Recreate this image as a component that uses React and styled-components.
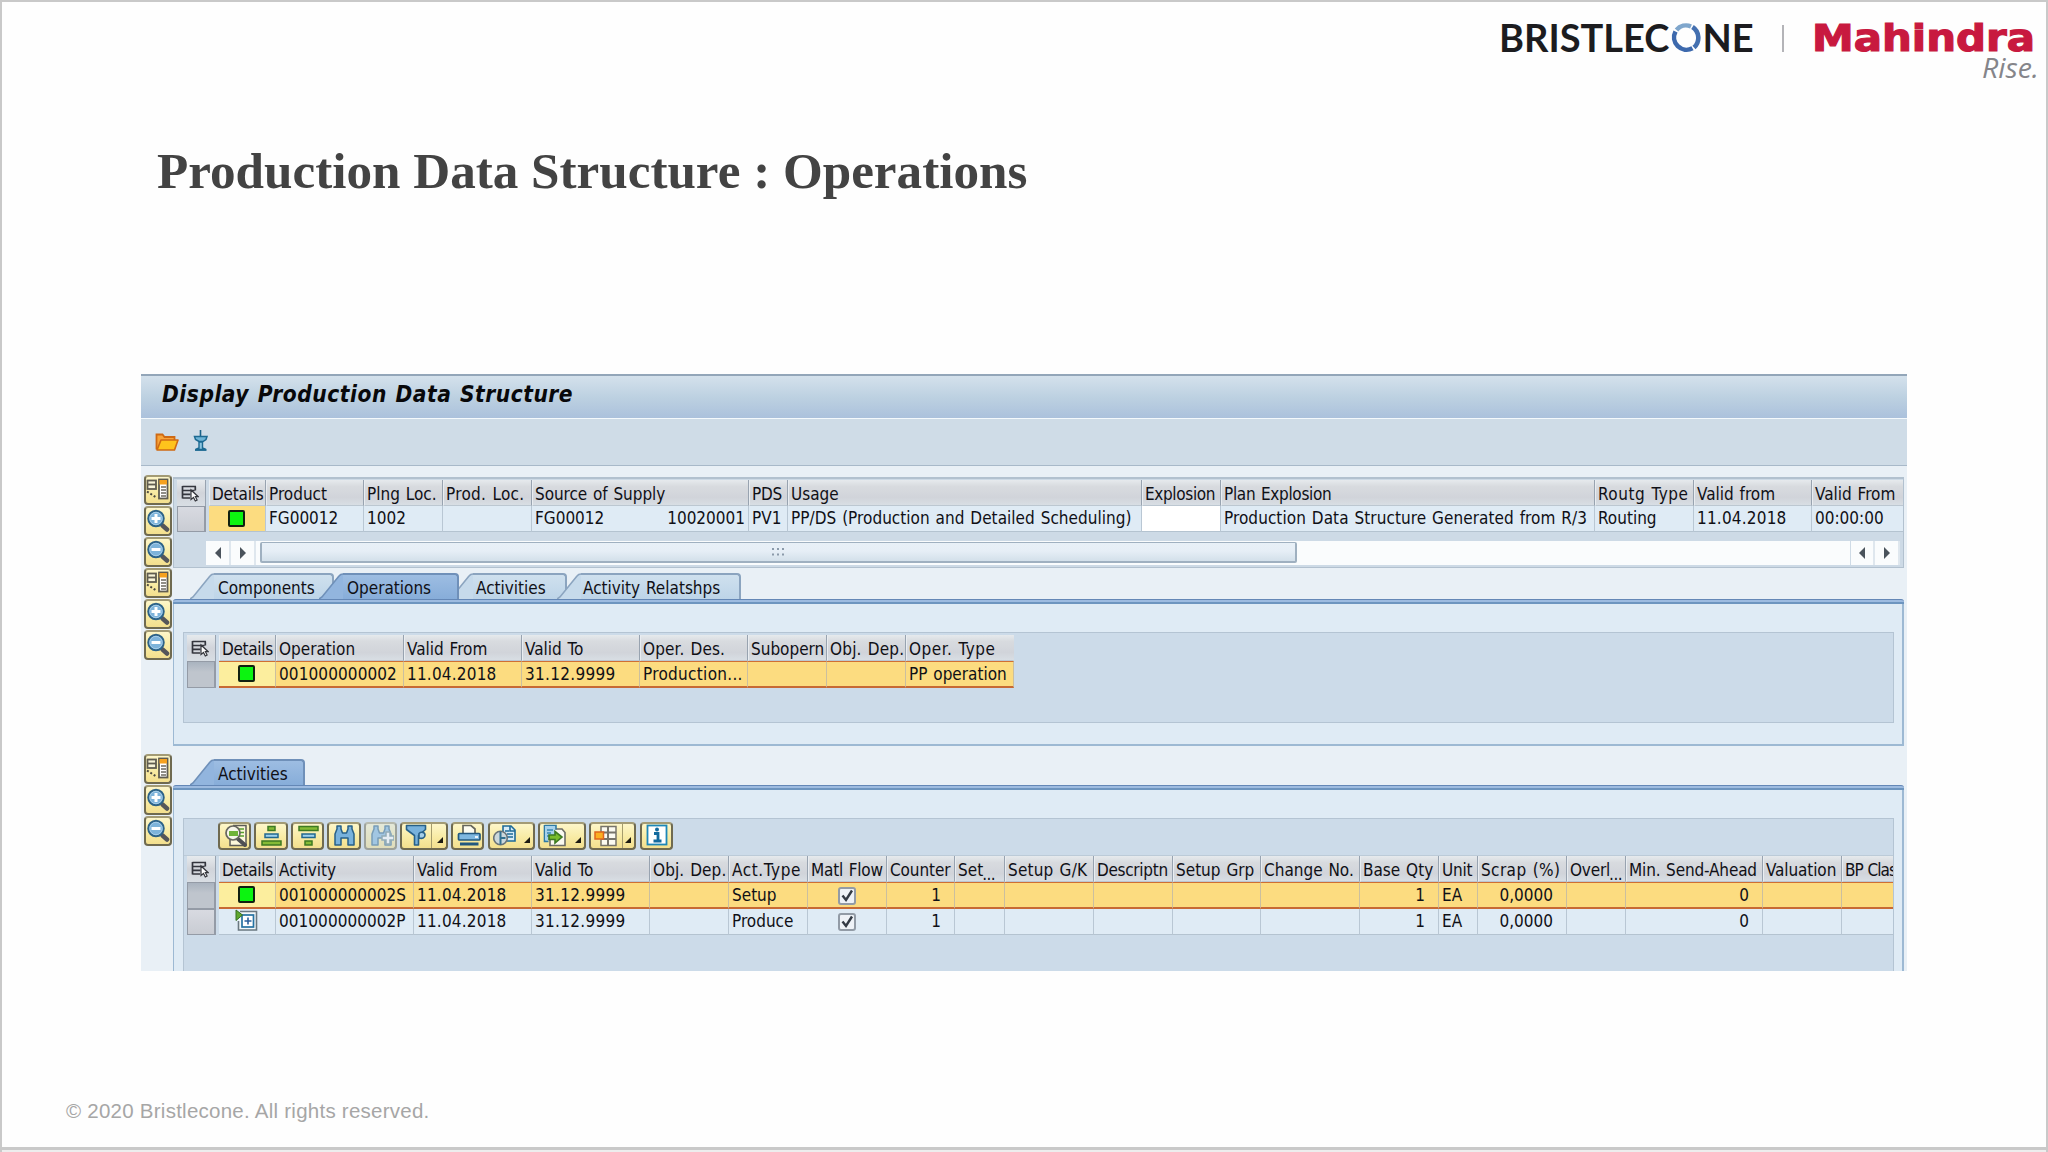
import React from 'react';
import styled, { createGlobalStyle, css } from 'styled-components';

const Global = createGlobalStyle`
  *, *::before, *::after { box-sizing: border-box; }
  html, body { margin: 0; padding: 0; background: #fefefe; }
  svg { display: block; }
`;

const uiFont = css`
  font-family: 'DejaVu Sans Condensed', 'DejaVu Sans', sans-serif;
  font-stretch: condensed;
`;

/* ---------- slide ---------- */

const Slide = styled.main`
  width: 2048px;
  height: 1152px;
  overflow: hidden;
  background: #fefefe;
  border: solid #c9c9c9;
  border-width: 2px 2px 0 2px;
  display: flex;
  flex-direction: column;
`;

const BrandBar = styled.header`
  height: 88px;
  flex: none;
  display: flex;
  justify-content: flex-end;
  padding: 14px 5px 0 0;
`;

const Bristlecone = styled.div`
  display: flex;
  width: 261px;
  height: 42px;
  font: 700 38px/43px Lato, sans-serif;
  color: #1c1c1f;
`;

const Ring = styled.svg`
  margin: 7px 2px 0 1px;
  flex: none;
`;

const BrandRule = styled.span`
  width: 2px;
  height: 27px;
  margin: 9px 28px 0 22px;
  background: #b4b4b8;
`;

const Heading = styled.h1`
  margin: 46px 0 0 155px;
  height: 70px;
  flex: none;
  font: 700 51.15px/70px 'Liberation Serif', serif;
  color: #434343;
  white-space: nowrap;
`;

const Copyright = styled.footer`
  margin: 125px 0 0 64px;
  height: 30px;
  flex: none;
  font: 400 20.5px/30px 'Liberation Sans', sans-serif;
  letter-spacing: 0.25px;
  color: #a6a6a6;
`;

const SlideEdge = styled.div`
  margin-top: auto;
  height: 5px;
  flex: none;
  background: #ededed;
  border-top: 3px solid #c9c9c9;
`;

/* ---------- application window ---------- */

const Window = styled.section`
  ${uiFont}
  width: 1766px;
  height: 597px;
  flex: none;
  margin: 168px 0 0 139px;
  overflow: hidden;
  display: flex;
  flex-direction: column;
  background: #e9f0f6;
  font-size: 17px;
  letter-spacing: 0;
  word-spacing: 1px;
  color: #101016;
`;

const TitleBar = styled.div`
  height: 45px;
  flex: none;
  padding-left: 21px;
  border-top: 2px solid #93a6b9;
  border-bottom: 1px solid #f4f9fc;
  background: linear-gradient(#d4e1ec, #bdd1e1 50%, #abc1dc);
  font-size: 22.5px;
  font-weight: 700;
  font-style: italic;
  letter-spacing: 0.53px;
  line-height: 37px;
  color: #08080a;
`;

const AppBar = styled.div`
  height: 47px;
  flex: none;
  display: flex;
  align-items: flex-start;
  padding: 10px 0 0 14px;
  gap: 14px;
  background: #cfdce7;
  border-bottom: 1px solid #a8b9c9;
`;

const Section = styled.div`
  display: flex;
  height: ${(p) => p.$h}px;
  flex: none;
  padding-right: 3px;
`;

const Rail = styled.div`
  width: 32px;
  flex: none;
  display: flex;
  flex-direction: column;
  gap: 1px;
  padding: ${(p) => p.$top}px 0 0 3px;
`;

const Body = styled.div`
  flex: 1;
  min-width: 0;
  display: flex;
  flex-direction: column;
  padding-top: ${(p) => p.$top}px;
`;

const yellowFace = css`
  border: 2px solid #6f6a50;
  border-top-color: #a39b75;
  border-radius: 4px;
  background: linear-gradient(#fdf6c9, #f8eba4 55%, #f3df8e);
`;

const RailButton = styled.span`
  ${yellowFace}
  width: 28px;
  height: 30px;
  flex: none;
  display: flex;
  align-items: center;
  justify-content: center;
`;

/* ---------- tables ---------- */

const ListBox = styled.div`
  flex: none;
  height: 91px;
  border: 1px solid #b2c1cf;
  border-top-width: 2px;
  background: #cddae6;
  padding: 1px 0 0 3px;
  overflow: hidden;
  display: flex;
  flex-direction: column;
`;

const Row = styled.div`
  display: grid;
  grid-template-columns: ${(p) => p.$cols};
  flex: none;
  width: max-content;
  height: ${(p) => p.$h || 26}px;
`;

const cellBase = css`
  overflow: hidden;
  white-space: nowrap;
  padding: 0 3px;
`;

const HeadCell = styled.div`
  ${cellBase}
  line-height: 28px;
  border-right: 1px solid ${(p) => (p.$last ? 'transparent' : '#98a3b0')};
  border-left: 1px solid #e9edf1;
  border-bottom: 1px solid #bcc7d1;
  padding: 0 0 0 2px;
  letter-spacing: ${(p) => p.$track || 0}px;
  background: linear-gradient(#e6eaed, #d8dbdf 25%, #d1d4da 70%, #d8dee4);
`;

const Cell = styled.div`
  ${cellBase}
  line-height: 25px;
  display: flex;
  justify-content: ${(p) => (p.$right ? 'flex-end' : p.$center ? 'center' : 'space-between')};
  padding-right: ${(p) => p.$pad || 3}px;
  border-right: 1px solid #b9c7d4;
  border-bottom: 1px solid #b4c3d0;
  letter-spacing: ${(p) => p.$track || 0}px;
  background: ${(p) => p.$bg || '#dfebf5'};
  ${(p) =>
    p.$selected &&
    css`
      background: ${p.$center && p.$pale ? '#fcee9e' : '#fcdc80'};
      border-top: 1px solid #cf6f33;
      border-bottom: 2px solid #c76a34;
      border-right-color: #cbbf9f;
    `}
`;

const SelectCell = styled.div`
  border: 1px solid #949ba6;
  border-width: 1px 2px 1px 1px;
  background: ${(p) => (p.$down ? 'linear-gradient(#a9b3bf, #bfc5cd 40%)' : 'linear-gradient(#d8dae1, #c9ccd3)')};
`;

const SelectHead = styled.div`
  display: flex;
  align-items: center;
  justify-content: center;
  padding-right: 2px;
  border-right: 1px solid #98a3b0;
  background: linear-gradient(#e6eaed, #d1d4da 50%, #d8dee4);
`;

const Light = styled.span`
  width: 17px;
  height: 17px;
  margin: ${(p) => p.$top || 4}px 2px 0 0;
  background: #0cf410;
  border: 2px solid #102010;
  border-radius: 2px;
`;

const Check = styled.span`
  width: 18px;
  height: 18px;
  margin: 4px 1px 0 0;
  background: #eef2f7;
  border: 2px solid #929ba6;
  border-radius: 3px;
`;

const Ellipsis = styled.span`
  position: relative;
  top: 4px;
  margin-left: -1px;
  letter-spacing: -0.5px;
`;

/* ---------- scrollbar ---------- */

const ScrollRow = styled.div`
  display: flex;
  flex: none;
  height: 24px;
  margin: 9px 3px 0 29px;
  background: #fafcfd;
`;

const Arrow = styled.span`
  width: 25px;
  height: 24px;
  flex: none;
  display: flex;
  align-items: center;
  justify-content: center;
  border-right: 2px solid #dfe7ee;
  border-left: ${(p) => (p.$lead ? '1px solid #cfdbe6' : 'none')};
`;

const Track = styled.span`
  flex: 1;
  padding: 1px 0 0 4px;
`;

const Thumb = styled.span`
  display: flex;
  align-items: center;
  justify-content: center;
  width: 1037px;
  height: 21px;
  padding-right: 3px;
  border: 2px solid #9fb0c0;
  border-top-width: 1px;
  border-radius: 2px;
  background: linear-gradient(#e8f0f7, #e6eef6 45%, #d3e0ea);
`;

/* ---------- tabs ---------- */

const TabStrip = styled.div`
  display: flex;
  flex: none;
  height: 26px;
  padding-left: 17px;
`;

const TabShell = styled.div`
  display: flex;
  width: ${(p) => p.$w}px;
  margin-left: ${(p) => p.$shift || 0}px;
  position: relative;
  z-index: ${(p) => (p.$on ? 2 : 1)};
`;

const TabFace = styled.div`
  flex: 1;
  height: 26px;
  padding-left: ${(p) => p.$indent ?? 4}px;
  line-height: 27px;
  white-space: nowrap;
  border-top: 2px solid ${(p) => (p.$on ? '#6f90b9' : '#8ba4bf')};
  border-right: 2px solid ${(p) => (p.$on ? '#6f90b9' : '#8ba4bf')};
  border-top-right-radius: 4px;
  background: ${(p) => (p.$on ? 'linear-gradient(#9dbde2, #87add9)' : 'linear-gradient(#cfe0ee, #bdd4e8)')};
`;

const TabLine = styled.div`
  height: 5px;
  flex: none;
  border-top: 1px solid #6487b6;
  border-bottom: 2px solid #6d95bf;
  background: #9dbbe0;
  border-radius: 3px 3px 0 0;
`;

const Panel = styled.div`
  height: ${(p) => p.$h}px;
  flex: none;
  padding: 28px 8px 0 9px;
  border: 2px solid #9db9d3;
  border-width: 0 2px 2px 1px;
  background: #dfebf5;
`;

const GridArea = styled.div`
  height: ${(p) => p.$h}px;
  overflow: hidden;
  border: 1px solid #b4c4d3;
  background: #ccdbe9;
  padding: ${(p) => p.$top || 0}px 0 0 3px;
`;

const ToolRow = styled.div`
  display: flex;
  gap: 3.3px;
  height: 37px;
  padding: 3px 0 0 34px;
  margin-left: -3px;
  border-bottom: 1px solid #bccbd8;
`;

const ToolButton = styled.span`
  ${yellowFace}
  width: ${(p) => (p.$wide ? 47.4 : 33.2)}px;
  height: 28px;
  display: flex;
  align-items: center;
  padding-left: 3px;
  opacity: ${(p) => (p.$off ? 0.5 : 1)};
`;

const Drop = styled.span`
  align-self: stretch;
  margin-left: 2px;
  flex: 1;
  display: flex;
  align-items: flex-end;
  justify-content: flex-end;
  padding: 0 3px 5px 0;
  border-left: 1px solid ${(p) => (p.$line ? '#a59c6c' : 'transparent')};
`;

/* ---------- icons ---------- */

const FolderIcon = () => (
  <svg width="24" height="26" viewBox="0 0 24 26">
    <path d="M1.500 20.500V5.500h6l2 2.500h10v4" fill="#f8a53a" stroke="#cf6a14" strokeWidth="1.800" />
    <path d="M2 21l4-10h17l-3.500 10z" fill="#ffc31c" stroke="#cf6a14" strokeWidth="1.600" strokeLinejoin="round" />
  </svg>
);

const StandIcon = () => (
  <svg width="16" height="26" viewBox="0 0 16 26">
    <path d="M7.500 1v7" stroke="#1a6288" strokeWidth="1.600" />
    <path d="M1.500 7.500h12.500l-1 3-3 2H6l-3.500-2z" fill="#6fb4d6" stroke="#1d6a92" strokeWidth="1.500" />
    <path d="M6 13h3.500v6l3.500 1.500H2.500L6 19z" fill="#8cc6e0" stroke="#1d6a92" strokeWidth="1.400" />
    <path d="M2 21h11.500" stroke="#1d6a92" strokeWidth="1.800" />
  </svg>
);

const DetailIcon = () => (
  <svg width="24" height="24" viewBox="0 0 24 24" fill="none">
    <rect x="1.500" y="2.500" width="8.500" height="8.500" fill="#f7f3d8" stroke="#5f5c50" strokeWidth="1.800" />
    <path d="M1.500 6.500h8.500" stroke="#5f5c50" strokeWidth="1.800" />
    <rect x="13" y="1.500" width="8.500" height="19" fill="#fff" stroke="#5f5c50" strokeWidth="1.800" />
    <rect x="13.500" y="2" width="7.500" height="4.500" fill="#f6a21f" />
    <path d="M15 9h5M15 12h5M15 15h5M15 18h5" stroke="#6c6a60" strokeWidth="1.300" />
    <path d="M1 13.500l10 6.500" stroke="#4a4840" strokeWidth="2" strokeDasharray="2 2" />
  </svg>
);

const ZoomIcon = ({ plus }) => (
  <svg width="24" height="24" viewBox="0 0 24 24" fill="none">
    <path d="M16.500 16.500l4.500 4" stroke="#55565a" strokeWidth="4.500" strokeLinecap="round" />
    <circle cx="10" cy="9.500" r="7.800" fill="#7db3da" stroke="#2d6287" strokeWidth="1.900" />
    <circle cx="10" cy="9.500" r="6.200" stroke="#a5cce8" strokeWidth="1" />
    <path d={plus ? 'M5.500 9.500h9M10 5v9' : 'M5.500 9.500h9'} stroke="#fff" strokeWidth="3" />
  </svg>
);

const LayoutIcon = () => (
  <svg width="18" height="18" viewBox="0 0 18 18" fill="none">
    <path d="M1.500 2.500h13.500M1.500 2v12.500M1.500 6.500h12M1.500 10.300h8M1.500 14h7.500M14.300 2.500v4" stroke="#34363e" strokeWidth="1.700" />
    <path d="M10 6v9.500l2.500-2 1.800 3.500 1.800-1-1.700-3.300h2.800z" fill="#fff" stroke="#34363c" strokeWidth="1.200" />
  </svg>
);

const DocDetail = () => (
  <svg width="26" height="24" viewBox="0 0 26 24" fill="none">
    <path d="M10 1.500h13v20H7V15" fill="#fcf7da" stroke="#5c5c58" strokeWidth="1.500" />
    <path d="M15 5h6M16 8.500h5M16 12h5" stroke="#56a02c" strokeWidth="1.700" />
    <path d="M15 15l7 6" stroke="#505054" strokeWidth="4" strokeLinecap="round" />
    <circle cx="10" cy="9" r="7" fill="#f6f6ea" stroke="#66665f" strokeWidth="1.700" />
    <path d="M6 7h9v5H6z" fill="#6fb338" />
  </svg>
);

const SortIcon = ({ down }) => (
  <svg width="25" height="24" viewBox="0 0 25 24" strokeWidth="1.500">
    <g transform={down ? 'translate(0,23.500) scale(1,-1)' : undefined}>
      <path d="M9 2.500h7v4H9z" fill="#85bb36" stroke="#3d7a22" />
      <path d="M6 10h13v3.500H6z" fill="#9ed2ee" stroke="#22688f" />
      <path d="M3 17h19v4H3z" fill="#85bb36" stroke="#3d7a22" />
    </g>
  </svg>
);

const FindIcon = ({ more }) => (
  <svg width="25" height="24" viewBox="0 0 25 24" strokeWidth="1.500" stroke="#276088" fill="#78b2dc">
    <path d="M5 2h4v3l1.500 4h4L16 5V2h4v3l2 5v11h-6v-7H9v7H3V10l2-5z" strokeLinejoin="round" />
    {more && <path d="M17 8h4v4h4v4h-4v4h-4v-4h-4v-4h4z" fill="#fff" stroke="#5b7f86" />}
  </svg>
);

const FilterIcon = () => (
  <svg width="24" height="24" viewBox="0 0 24 24" fill="#78b2dc" stroke="#276088" strokeWidth="1.600">
    <path d="M1.500 1.500h19v4l-7 6v9.500h-4v-9.500l-8-6z" strokeLinejoin="round" />
    <path d="M14 15V9.500c2-2 6-1.500 6 1.500s-3 4-6 3" fill="#a5cfe9" />
  </svg>
);

const PrintIcon = () => (
  <svg width="26" height="24" viewBox="0 0 26 24" strokeWidth="1.700">
    <path d="M7 9V1.500h8l4 3.500v4" fill="#fdfcf0" stroke="#66665c" />
    <rect x="2.500" y="9.500" width="21.500" height="6.500" rx="1" fill="#7fb8e0" stroke="#22587f" />
    <path d="M4 20h18.500" stroke="#22587f" strokeWidth="3" />
    <path d="M19 13h3" stroke="#fff" />
  </svg>
);

const ViewIcon = () => (
  <svg width="26" height="24" viewBox="0 0 26 24" strokeWidth="1.600" fill="none">
    <path d="M10 2h8l4 4v11H10z" fill="#d7ecf7" stroke="#1e6a98" />
    <path d="M17 2v5h5M12 7h4M14 10h6M14 13h6" stroke="#1e6a98" />
    <circle cx="7.500" cy="14" r="6.800" fill="#ccd8dc" stroke="#6b7478" />
    <path d="M7.500 7.500v13M7.500 14h5" stroke="#33708f" strokeWidth="2" />
  </svg>
);

const ExportIcon = () => (
  <svg width="26" height="24" viewBox="0 0 26 24" strokeWidth="1.600" fill="none">
    <path d="M7 5h12l3 3.500v13H7z" fill="#fbfaf0" stroke="#6d6d66" />
    <path d="M1.500 1.500h11.500v4M1.500 1v16.500h4" fill="#a7d2eb" stroke="#2f7ba4" />
    <path d="M2 2h10v14H2z" fill="#a7d2eb" />
    <path d="M4 6h6M4 9h4M4 12h3" stroke="#3a88b2" />
    <path d="M6 11h6V7.500l7 5.500-7 6v-3.500H6z" fill="#79bd2c" stroke="#3d7a22" />
  </svg>
);

const GridIcon = () => (
  <svg width="26" height="24" viewBox="0 0 26 24" strokeWidth="1.500" fill="none">
    <path d="M7 2.500h15v19H7z" fill="#fbfaf0" stroke="#77746a" />
    <path d="M7 8.500h15M7 15h15M14 2.500v19" stroke="#77746a" strokeWidth="2" />
    <rect x="1" y="8" width="8.500" height="7" fill="#fbb022" stroke="#e0661c" />
  </svg>
);

const InfoIcon = () => (
  <svg width="24" height="24" viewBox="0 0 24 24" fill="none">
    <rect x="2.500" y="1.500" width="19" height="19" fill="#fff" stroke="#1d87b8" strokeWidth="1.800" />
    <path d="M9 9.500h4v7M8.500 17h8" stroke="#126a9e" strokeWidth="2.800" />
    <circle cx="12" cy="5.500" r="2" fill="#126a9e" />
  </svg>
);

const ExpandIcon = () => (
  <svg width="24" height="24" viewBox="0 0 24 24" fill="none">
    <path d="M5 2.500h16.500v18.500H3.500v-9" fill="#f3f8fa" stroke="#6a7880" strokeWidth="1.600" />
    <rect x="7" y="6" width="11.500" height="12" fill="#fff" stroke="#2673a2" strokeWidth="1.700" />
    <path d="M9.500 12h7M13 8.500v7" stroke="#2a5f9b" strokeWidth="1.600" />
    <path d="M1 1l6.500 5L1 11.500z" fill="#60a82e" stroke="#356e20" />
  </svg>
);

const CheckMark = () => (
  <svg width="14" height="14" viewBox="0 0 14 14" fill="none">
    <path d="M2.500 6.500l3.500 4.500L12 1.500" stroke="#333a44" strokeWidth="2.400" />
  </svg>
);

const Caret = ({ left }) => (
  <svg width="8" height="12" viewBox="0 0 8 12">
    <path d={left ? 'M7 0v12L1 6z' : 'M1 0v12l6-6z'} fill="#4a535c" />
  </svg>
);

const Corner = () => (
  <svg width="6" height="6" viewBox="0 0 6 6">
    <path d="M6 0v6H0z" fill="#1d1b12" />
  </svg>
);

const Grip = () => (
  <svg width="14" height="10" viewBox="0 0 14 10">
    <path d="M2 2h2M7 2h2M12 2h2M2 7.500h2M7 7.500h2M12 7.500h2" stroke="#8b9aaa" strokeWidth="2" />
  </svg>
);

/* ---------- composed parts ---------- */

const RailSet = ({ top }) => (
  <Rail $top={top}>
    <RailButton><DetailIcon /></RailButton>
    <RailButton><ZoomIcon plus /></RailButton>
    <RailButton><ZoomIcon /></RailButton>
  </Rail>
);

const Tab = ({ label, on, indent, ...rest }) => (
  <TabShell $on={on} {...rest}>
    <svg width="24" height="26" viewBox="0 0 24 26">
      <path d="M0 26L3 24L20 3q1.500-2 4-2v25z" fill={on ? '#92b5de' : '#c6daeb'} />
      <path d="M0 26L3 24L20 3q1.500-2 4-2" fill="none" stroke={on ? '#6f90b9' : '#8ba4bf'} strokeWidth="1.600" />
    </svg>
    <TabFace $on={on} $indent={indent}>{label}</TabFace>
  </TabShell>
);

const colsOf = (columns) => ['29px', '3px', ...columns.map((c) => c.w + 'px')].join(' ');

const Header = ({ columns }) => (
  <Row $cols={colsOf(columns)}>
    <SelectHead><LayoutIcon /></SelectHead>
    <span />
    {columns.map((c, i) => (
      <HeadCell key={i} $track={c.track} $last={i === columns.length - 1}>
        {c.label}
        {c.cut && <Ellipsis>...</Ellipsis>}
      </HeadCell>
    ))}
  </Row>
);

const Line = ({ columns, cells, selected, down }) => (
  <Row $cols={colsOf(columns)} $h={selected ? 27 : 26}>
    <SelectCell $down={down} />
    <span />
    {columns.map((c, i) => (
      <Cell
        key={i}
        $selected={selected}
        $right={c.right}
        $pad={c.pad}
        $center={c.center}
        $pale={i === 0}
        $bg={c.bg}
        $track={c.cellTrack}
      >
        {cells[i]}
      </Cell>
    ))}
  </Row>
);

const productCols = [
  { label: 'Details', w: 57, center: true, bg: '#fcdc80', track: -0.2 },
  { label: 'Product', w: 98 },
  { label: 'Plng Loc.', w: 79 },
  { label: 'Prod. Loc.', w: 89, track: 0.3 },
  { label: 'Source of Supply', w: 217, track: -0.05 },
  { label: 'PDS', w: 39, track: -0.2 },
  { label: 'Usage', w: 354, cellTrack: 0.03 },
  { label: 'Explosion', w: 79, bg: '#ffffff', track: -0.35 },
  { label: 'Plan Explosion', w: 374, track: -0.3, cellTrack: 0.06 },
  { label: 'Routg Type', w: 99, track: 0.5 },
  { label: 'Valid from', w: 118, cellTrack: 0.2 },
  { label: 'Valid From', w: 92 },
];

const operationCols = [
  { label: 'Details', w: 57, center: true, track: -0.3 },
  { label: 'Operation', w: 128, cellTrack: 0.1 },
  { label: 'Valid From', w: 118, cellTrack: 0.2 },
  { label: 'Valid To', w: 118, cellTrack: 0.3 },
  { label: 'Oper. Des.', w: 108, track: 0.15, cellTrack: 0.3 },
  { label: 'Subopern', w: 79, track: 0 },
  { label: 'Obj. Dep.', w: 79, track: 0.2 },
  { label: 'Oper. Type', w: 108, track: 0.5 },
];

const activityCols = [
  { label: 'Details', w: 57, center: true, track: -0.3 },
  { label: 'Activity', w: 138, cellTrack: 0.05 },
  { label: 'Valid From', w: 118, cellTrack: 0.2 },
  { label: 'Valid To', w: 118, cellTrack: 0.3 },
  { label: 'Obj. Dep.', w: 79, track: 0.1 },
  { label: 'Act.Type', w: 79, track: 0.6 },
  { label: 'Matl Flow', w: 79, center: true, track: -0.2 },
  { label: 'Counter', w: 68, right: true, pad: 13, track: -0.1 },
  { label: 'Set', w: 50, cut: true },
  { label: 'Setup G/K', w: 89, track: 0.2 },
  { label: 'Descriptn', w: 79, track: -0.3 },
  { label: 'Setup Grp', w: 88 },
  { label: 'Change No.', w: 99 },
  { label: 'Base Qty', w: 79, right: true, pad: 13 },
  { label: 'Unit', w: 39, track: -0.2 },
  { label: 'Scrap (%)', w: 89, right: true, pad: 13, track: 0.4 },
  { label: 'Overl', w: 59, cut: true, track: -0.2 },
  { label: 'Min. Send-Ahead', w: 137, right: true, pad: 13, track: -0.15 },
  { label: 'Valuation', w: 79, track: -0.1 },
  { label: 'BP Clas', w: 79, track: -1 },
];

const box = <Check><CheckMark /></Check>;

const activityCells = (icon, id, type) => [
  icon, id, '11.04.2018', '31.12.9999', '', type, box, '1', '', '', '', '', '', '1', 'EA', '0,0000', '', '0', '', '',
];

const tools = [
  { icon: <DocDetail /> },
  { icon: <SortIcon /> },
  { icon: <SortIcon down /> },
  { icon: <FindIcon /> },
  { icon: <FindIcon more />, off: true },
  { icon: <FilterIcon />, wide: true, line: true },
  { icon: <PrintIcon /> },
  { icon: <ViewIcon />, wide: true },
  { icon: <ExportIcon />, wide: true },
  { icon: <GridIcon />, wide: true, line: true },
  { icon: <InfoIcon /> },
];

export default function App() {
  return (
    <Slide>
      <Global />
      <BrandBar>
        <Bristlecone>
          <span>BRISTLEC</span>
          <Ring width="30" height="30" viewBox="0 0 30 30" fill="none" strokeWidth="4.600">
            <path d="M21.500 4A13 13 0 0 1 23 24.500" stroke="#4470b0" />
            <path d="M21.500 25.300A12.500 12.500 0 0 1 4.500 8.500" stroke="#3d69ad" />
            <path d="M5.500 7A12.500 12.500 0 0 1 20 3.500" stroke="#7fa6cc" />
          </Ring>
          <span>NE</span>
        </Bristlecone>
        <BrandRule />
        <svg width="229" height="74" viewBox="0 0 229 74">
          <text x="0" y="35" fontFamily="'DejaVu Sans', sans-serif" fontWeight="700" fontSize="38" fill="#c8193f" stroke="#c8193f" strokeWidth="1.200" textLength="223" lengthAdjust="spacingAndGlyphs">Mahindra</text>
          <text x="170" y="62" fontFamily="'Open Sans', sans-serif" fontStyle="italic" fontSize="27" fill="#85858a" textLength="57" lengthAdjust="spacingAndGlyphs">Rise.</text>
        </svg>
      </BrandBar>
      <Heading>Production Data Structure : Operations</Heading>

      <Window>
        <TitleBar>Display Production Data Structure</TitleBar>
        <AppBar>
          <FolderIcon />
          <StandIcon />
        </AppBar>

        <Section $h={102}>
          <RailSet top={9} />
          <Body $top={11}>
            <ListBox>
              <Header columns={productCols} />
              <Line
                columns={productCols}
                cells={[
                  <Light key="l" />, 'FG00012', '1002', '',
                  <React.Fragment key="s"><span>FG00012</span><span>10020001</span></React.Fragment>,
                  'PV1', 'PP/DS (Production and Detailed Scheduling)', '',
                  'Production Data Structure Generated from R/3', 'Routing', '11.04.2018', '00:00:00',
                ]}
              />
              <ScrollRow>
                <Arrow><Caret left /></Arrow>
                <Arrow><Caret /></Arrow>
                <Track><Thumb><Grip /></Thumb></Track>
                <Arrow $lead><Caret left /></Arrow>
                <Arrow><Caret /></Arrow>
              </ScrollRow>
            </ListBox>
          </Body>
        </Section>

        <Section $h={186}>
          <RailSet top={0} />
          <Body $top={5}>
            <TabStrip>
              <Tab label="Components" $w={144} />
              <Tab label="Operations" on $w={140} $shift={-15} />
              <Tab label="Activities" $w={118} $shift={-10} indent={3} />
              <Tab label="Activity Relatshps" $w={184} $shift={-10} indent={2} />
            </TabStrip>
            <TabLine />
            <Panel $h={142}>
              <GridArea $h={91} $top={2}>
                <Header columns={operationCols} />
                <Line
                  selected
                  down
                  columns={operationCols}
                  cells={[<Light key="l" $top={3} />, '001000000002', '11.04.2018', '31.12.9999', 'Production...', '', '', 'PP operation']}
                />
              </GridArea>
            </Panel>
          </Body>
        </Section>

        <Section $h={217}>
          <RailSet top={0} />
          <Body $top={5}>
            <TabStrip>
              <Tab label="Activities" on $w={115} />
            </TabStrip>
            <TabLine />
            <Panel $h={220}>
              <GridArea $h={190}>
                <ToolRow>
                  {tools.map((t, i) => (
                    <ToolButton key={i} $wide={t.wide} $off={t.off}>
                      {t.icon}
                      {t.wide && <Drop $line={t.line}><Corner /></Drop>}
                    </ToolButton>
                  ))}
                </ToolRow>
                <Header columns={activityCols} />
                <Line selected down columns={activityCols} cells={activityCells(<Light $top={3} />, '001000000002S', 'Setup')} />
                <Line columns={activityCols} cells={activityCells(<ExpandIcon />, '001000000002P', 'Produce')} />
              </GridArea>
            </Panel>
          </Body>
        </Section>
      </Window>

      <Copyright>© 2020 Bristlecone. All rights reserved.</Copyright>
      <SlideEdge />
    </Slide>
  );
}
